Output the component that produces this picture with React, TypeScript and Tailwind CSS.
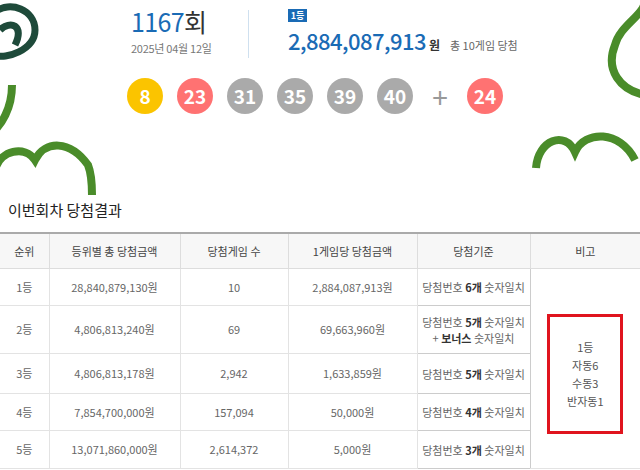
import React from "react";

const balls: [string, string][] = [
  ["8", "bg-[#fbc400]"],
  ["23", "bg-[#ff7272]"],
  ["31", "bg-[#aaaaaa]"],
  ["35", "bg-[#aaaaaa]"],
  ["39", "bg-[#aaaaaa]"],
  ["40", "bg-[#aaaaaa]"],
];

const rows = [
  ["1등", "28,840,879,130원", "10", "2,884,087,913원", "6"],
  ["2등", "4,806,813,240원", "69", "69,663,960원", "5b"],
  ["3등", "4,806,813,178원", "2,942", "1,633,859원", "5"],
  ["4등", "7,854,700,000원", "157,094", "50,000원", "4"],
  ["5등", "13,071,860,000원", "2,614,372", "5,000원", "3"],
];

function Ball({ n, c }: { n: string; c: string }) {
  return (
    <div className={`w-[36px] h-[36px] rounded-full ${c} text-white text-[19px] font-bold flex items-center justify-center`}>
      {n}
    </div>
  );
}

export default function App() {
  const font = { fontFamily: '"Noto Sans CJK KR", "Noto Sans", sans-serif' };
  const heights = ["h-[37px]", "h-[48px]", "h-[40px]", "h-[37px]", "h-[38px]"];
  return (
    <div className="w-[640px] h-[470px] bg-white overflow-hidden relative" style={font}>
      <svg className="absolute left-0 top-0" width="640" height="200" viewBox="0 0 640 200" fill="none">
        <path d="M-5 12 C10 0 35 10 35 30 C35 50 5 60 -5 55 M0 30 C10 20 25 25 15 45" stroke="#1e4a3a" strokeWidth="7" />
        <path d="M12 85 C12 110 0 125 -5 130" stroke="#4a8c2a" strokeWidth="8" />
        <path d="M-5 170 C0 150 25 145 35 160 C45 140 70 140 88 165 C92 175 92 185 92 195" stroke="#4a8c2a" strokeWidth="8" />
        <path d="M645 0 C645 15 620 25 615 45 C605 70 620 90 645 95" stroke="#4a8c2a" strokeWidth="8" />
        <path d="M536 168 C538 140 565 130 575 152 C585 130 620 130 635 160" stroke="#4a8c2a" strokeWidth="8" />
      </svg>
      <div className="relative flex pl-[131px] pt-[6px]">
        <div className="w-[117px]">
          <div className="text-[25px] leading-[30px] text-[#1a6bb5] tracking-tight">1167<span className="text-[#333]">회</span></div>
          <div className="text-[11px] text-[#777] mt-[4px] tracking-tight">2025년 04월 12일</div>
        </div>
        <div className="w-px h-[48px] bg-[#cfe0ef] mt-[4px]" />
        <div className="pl-[39px]">
          <div className="w-[19px] h-[13px] bg-[#1a6bb5] text-white text-[9px] font-bold flex items-center justify-center mt-[3px]">1등</div>
          <div className="flex items-baseline mt-[5px]">
            <span className="text-[22px] leading-[26px] text-[#1a6bb5] font-medium tracking-tight">2,884,087,913</span>
            <span className="text-[12px] text-[#333] font-bold ml-[3px]">원</span>
            <span className="text-[11px] text-[#666] ml-[10px]">총 10게임 당첨</span>
          </div>
        </div>
      </div>
      <div className="relative flex items-center pl-[127px] mt-[20px] gap-[14px]">
        {balls.map(([n, c]) => <Ball key={n} n={n} c={c} />)}
        <div className="text-[28px] text-[#999] w-[26px] text-center leading-none">+</div>
        <Ball n="24" c="bg-[#ff7272]" />
      </div>
      <div className="relative text-[15px] text-[#222] pl-[8px] mt-[85px]">이번회차 당첨결과</div>
      <table className="relative mt-[10px] w-[640px] border-collapse text-[11px] text-[#666] text-center border-t-2 border-[#aaa] table-fixed">
        <colgroup>
          <col className="w-[49px]" /><col className="w-[131px]" /><col className="w-[108px]" /><col className="w-[129px]" /><col className="w-[113px]" /><col />
        </colgroup>
        <thead>
          <tr className="h-[36px] bg-[#f7f7f7]">
            {["순위", "등위별 총 당첨금액", "당첨게임 수", "1게임당 당첨금액", "당첨기준", "비고"].map((h, i) => (
              <th key={h} className={`font-normal text-[#444] border-b border-[#ddd] ${i < 5 ? "border-r" : ""}`}>{h}</th>
            ))}
          </tr>
        </thead>
        <tbody>
          {rows.map((r, i) => (
            <tr key={r[0]} className={heights[i]}>
              <td className="border-b border-r border-[#e3e3e3]">{r[0]}</td>
              <td className="border-b border-r border-[#e3e3e3]">{r[1]}</td>
              <td className="border-b border-r border-[#e3e3e3]">{r[2]}</td>
              <td className="border-b border-r border-[#e3e3e3]">{r[3]}</td>
              <td className="border-b border-r border-[#ccc] leading-[16px]">
                {r[4] === "5b" ? (
                  <>당첨번호 <b className="text-[#333]">5개</b> 숫자일치<br />+ <b className="text-[#333]">보너스</b> 숫자일치</>
                ) : (
                  <>당첨번호 <b className="text-[#333]">{r[4]}개</b> 숫자일치</>
                )}
              </td>
              {i === 0 && (
                <td rowSpan={5} className="border-b border-[#e3e3e3]">
                  <div className="mx-auto w-[76px] h-[120px] border-[3px] border-[#e0141e] flex flex-col items-center justify-center leading-[18px] text-[#555] mt-[10px]">
                    <div>1등</div><div>자동6</div><div>수동3</div><div>반자동1</div>
                  </div>
                </td>
              )}
            </tr>
          ))}
        </tbody>
      </table>
    </div>
  );
}
